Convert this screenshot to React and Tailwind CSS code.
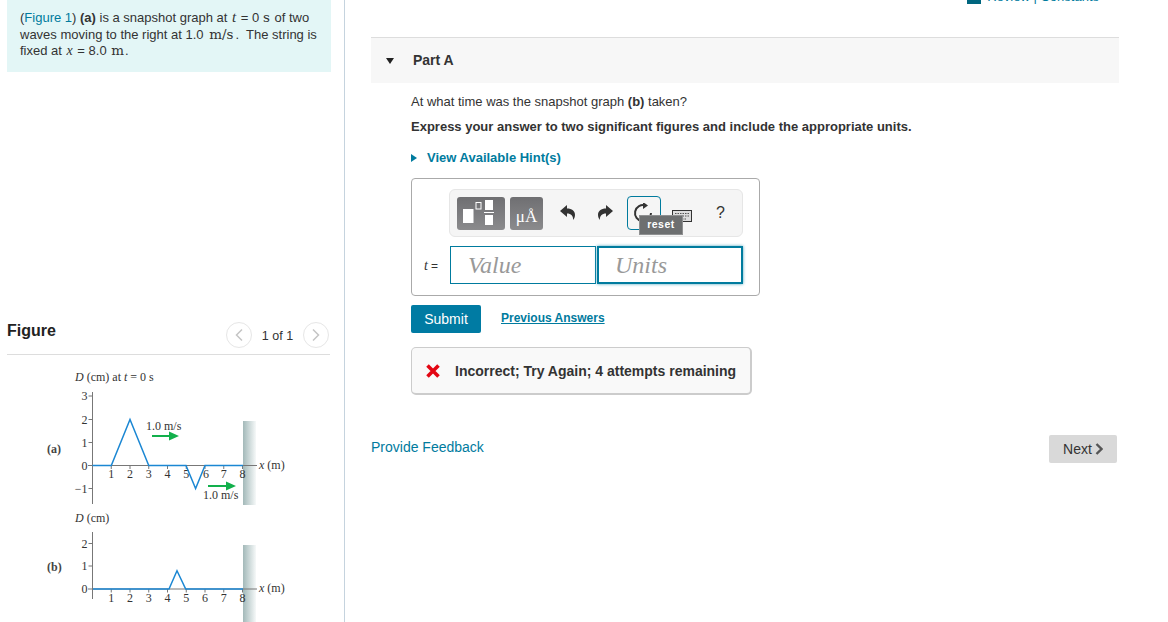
const sans = "font-['Liberation_Sans',Arial,sans-serif]";
const serif = "font-['Liberation_Serif','Times_New_Roman',serif]";
const mathUp = "font-['DejaVu_Serif',serif] text-[13.5px] leading-none";

function Graph() {
  const xs = [1, 2, 3, 4, 5, 6, 7, 8];
  const px = (n) => 92.5 + n * 18.75;
  const Tick = ({ x, y, w = 4 }) => <line x1={x - w} x2={x} y1={y} y2={y} stroke="#777" strokeWidth="1" />;
  return (
    <svg width="260" height="262" viewBox="40 360 260 262" className="block" style={{ fontFamily: "'Liberation Serif', serif" }} fill="#333" fontSize="12">
      <defs>
        <linearGradient id="wall" x1="0" x2="1" y1="0" y2="0">
          <stop offset="0" stopColor="#a3b9b9" />
          <stop offset="1" stopColor="#f6f9f9" />
        </linearGradient>
      </defs>

      {/* graph a */}
      <text x="75" y="381"><tspan fontStyle="italic">D</tspan> (cm) at <tspan fontStyle="italic">t</tspan><tspan dx="3">=</tspan><tspan dx="3">0 s</tspan></text>
      <rect x="243" y="421" width="13" height="84" fill="url(#wall)" />
      <line x1="92.5" x2="92.5" y1="392" y2="504" stroke="#777" />
      <line x1="88" x2="257" y1="465.5" y2="465.5" stroke="#777" />
      <Tick x={92.5} y={396} /><Tick x={92.5} y={419.5} /><Tick x={92.5} y={442.5} /><Tick x={92.5} y={488.5} />
      {xs.map((n) => <line key={n} x1={px(n)} x2={px(n)} y1="465.5" y2="469" stroke="#777" />)}
      {[["3", 396], ["2", 419.5], ["1", 442.5], ["0", 465.5], ["−1", 488.5]].map(([t, y]) => (
        <text key={t} x="87.500" y={y + 4} textAnchor="end">{t}</text>
      ))}
      {xs.map((n) => <text key={n} x={px(n) + (n === 6 ? 1 : 0)} y="478" textAnchor="middle">{n}</text>)}
      <polyline points="92.5,465.5 111.3,465.5 130,419.5 148.75,465.5 186,465.5 195.6,488.5 205,465.5 243,465.5" fill="none" stroke="#1b87d3" strokeWidth="1.5" />
      <text x="146" y="430">1.0 m/s</text>
      <text x="203" y="499">1.0 m/s</text>
      <path d="M152 435h17v-3.5l10 4.5-10 4.5V437h-17z" fill="#12b04c" />
      <path d="M208 485h18v-3.5l10 4.5-10 4.5V487h-18z" fill="#12b04c" />
      <text x="259" y="469"><tspan fontStyle="italic">x</tspan> (m)</text>
      <text x="47" y="453" fontWeight="bold" fill="#444">(a)</text>

      {/* graph b */}
      <text x="75" y="522"><tspan fontStyle="italic">D</tspan> (cm)</text>
      <rect x="243" y="545" width="13" height="77" fill="url(#wall)" />
      <line x1="92.5" x2="92.5" y1="532" y2="599" stroke="#777" />
      <line x1="88" x2="257" y1="589" y2="589" stroke="#777" />
      <Tick x={92.5} y={543.5} /><Tick x={92.5} y={566} />
      {xs.map((n) => <line key={n} x1={px(n)} x2={px(n)} y1="589" y2="592.5" stroke="#777" />)}
      {[["2", 543.5], ["1", 566], ["0", 589]].map(([t, y]) => (
        <text key={t} x="87.500" y={y + 4} textAnchor="end">{t}</text>
      ))}
      {xs.map((n) => <text key={n} x={px(n)} y="602" textAnchor="middle">{n}</text>)}
      <polyline points="93,589 169,589 177,570.7 185.7,589 243,589" fill="none" stroke="#1b87d3" strokeWidth="1.5" />
      <text x="259" y="592"><tspan fontStyle="italic">x</tspan> (m)</text>
      <text x="47" y="571" fontWeight="bold" fill="#444">(b)</text>
    </svg>
  );
}

function PagerBtn({ dir }) {
  return (
    <span className="w-[26px] h-[26px] rounded-full border border-[#e6e6e6] flex items-center justify-center">
      <svg width="10" height="14" viewBox="0 0 10 14" fill="none" stroke="#c4c4c4" strokeWidth="1.5">
        <path d={dir === "l" ? "M8 1.5 2.5 7 8 12.5" : "M2 1.5 7.5 7 2 12.5"} />
      </svg>
    </span>
  );
}

function LeftColumn() {
  return (
    <div className="w-[345px] shrink-0 h-full border-r border-[#c5d3de] pl-[7px] overflow-hidden">
      <div className={`w-[324px] h-[72px] bg-[#e3f6f6] pl-[13px] pt-[10px] pr-[8px] text-[13px] leading-[16.5px] text-[#333] ${sans}`}>
        (<span className="text-[#007b9e]">Figure 1</span>) <b>(a)</b> is a snapshot graph at <i className={`${serif} text-[15px] leading-none mx-[1px]`}>t</i> = 0 <span className={`${mathUp} mr-[1px]`}>s</span> of two waves moving to the right at 1.0 <span className={`${mathUp} ml-[2px] mr-[2px]`}>m/s</span>.&nbsp; The string is fixed at <i className={`${serif} text-[14px] leading-none mx-[1px]`}>x</i> = 8.0 <span className={`${mathUp} ml-[1px] mr-[1px]`}>m</span>.
      </div>

      <div className={`mt-[246px] w-[323px] h-[37px] border-b border-[#ddd] flex items-start ${sans}`}>
        <span className="text-[16px] font-bold text-[#222] leading-[26px]">Figure</span>
        <span className="ml-auto flex items-center text-[12.5px] text-[#333] mt-[4px] mr-[1px]">
          <PagerBtn dir="l" />
          <span className="w-[51px] text-center pt-[2px]">1 of 1</span>
          <PagerBtn dir="r" />
        </span>
      </div>
      <div className="-ml-[7px] pl-[40px] mt-[5px]">
        <Graph />
      </div>
    </div>
  );
}

function Toolbar() {
  return (
    <div className="ml-[37px] w-[294px] h-[48px] bg-[#f5f5f5] border border-[#e6e6e6] rounded-[6px] flex items-center relative">
      <span className="ml-[7px] w-[48px] h-[33px] rounded-[3px] bg-gradient-to-b from-[#6f6f72] to-[#8b8b8d]">
        <svg className="block" width="48" height="33" viewBox="0 0 48 33" fill="#fff">
          <rect x="6" y="12" width="10.500" height="14" />
          <rect x="19" y="5.500" width="5" height="6.500" fill="none" stroke="#fff" strokeWidth="1" />
          <rect x="28" y="3" width="8" height="10" />
          <rect x="27" y="15" width="10" height="1" />
          <rect x="28" y="18" width="8" height="10" />
        </svg>
      </span>
      <span className={`ml-[5px] w-[33px] h-[33px] rounded-[3px] bg-gradient-to-b from-[#6f6f72] to-[#8b8b8d] flex items-end justify-center pb-[5px] text-white text-[17px] leading-none ${serif}`}>
        μÅ
      </span>
      <svg className="ml-[17px]" width="15" height="16" viewBox="0 0 15 16" fill="#333">
        <path d="M0 6 7 0V3.500C12 3.500 15 6 15 10 15 12 14 14 13 15 13.500 11 11 8.500 7 8.500V12z" />
      </svg>
      <svg className="ml-[23px]" width="15" height="16" viewBox="0 0 15 16" fill="#333">
        <path d="M15 6 8 0V3.500C3 3.500 0 6 0 10 0 12 1 14 2 15 1.500 11 4 8.500 8 8.500V12z" />
      </svg>
      <span className="ml-[14px] w-[34px] h-[34px] rounded-[4px] border border-[#007b9e] flex items-center justify-center">
        <svg className="-ml-[3px]" width="20" height="20" viewBox="0 0 20 20" fill="none" stroke="#333" strokeWidth="2">
          <path d="M12.500 2.500A8 8 0 1 0 18 10" />
          <path d="M10 -1v7l5-3.500z" fill="#333" stroke="none" />
        </svg>
      </span>
      <svg className="ml-[11px] mt-[6px]" width="20" height="12" viewBox="0 0 20 12" fill="#777" stroke="#333" strokeWidth="1">
        <rect x="0.500" y="0.500" width="19" height="11" fill="#ddd" />
        <path d="M3 3.500h14M3 6h14M5 9h10" strokeDasharray="1.500 1" fill="none" stroke="#555" />
      </svg>
      <span className={`ml-[24px] text-[16px] text-[#333] ${sans}`}>?</span>
      <span className={`absolute left-[189px] top-[25px] w-[44px] h-[20px] bg-[#6d6f70] border border-[#8f9091] text-white text-[10.5px] font-bold flex items-center justify-center tracking-[0.5px] ${sans}`}>
        reset
      </span>
    </div>
  );
}

function AnswerBox() {
  return (
    <div className="mt-[12px] w-[349px] h-[118px] border border-[#aaa] rounded-[4px] pt-[10px]">
      <Toolbar />
      <div className="flex items-center mt-[9px]">
        <span className={`w-[38px] text-center text-[12px] text-[#333] ${sans}`}>
          <i className={`${serif} text-[14px]`}>t</i> =
        </span>
        <span className={`w-[146px] h-[38px] border border-[#007b9e] flex items-center pl-[17px] pb-[1px] text-[24px] italic text-[#999] ${serif}`}>Value</span>
        <span className={`ml-[1px] w-[146px] h-[38px] border-2 border-[#007b9e] shadow-[0_0_3px_#4aa3bd] flex items-center pl-[16px] pb-[1px] text-[24px] italic text-[#999] ${serif}`}>Units</span>
      </div>
    </div>
  );
}

function RightColumn() {
  return (
    <div className={`ml-[26px] w-[748px] h-full text-[#333] ${sans}`}>
      <div className="h-[37px] relative overflow-hidden">
        <div className="absolute right-[20px] -top-[11px] flex items-center text-[#007b9e] text-[13px] leading-[16px]">
          <span className="w-[14px] h-[14px] bg-[#00667f] mr-[6px]" />
          Review | Constants
        </div>
      </div>
      <div className="h-[46px] bg-[#f7f7f7] border-t border-[#ddd] flex items-center">
        <span className="ml-[15px] w-0 h-0 border-x-[4.5px] border-x-transparent border-t-[6px] border-t-[#222]" />
        <span className="ml-[19px] text-[14px] font-bold text-[#333]">Part A</span>
      </div>
      <div className="pl-[40px]">
        <p className="mt-[11px] text-[13px] leading-[16px]">At what time was the snapshot graph <b>(b)</b> taken?</p>
        <p className="mt-[9px] text-[13px] leading-[16px] font-bold">Express your answer to two significant figures and include the appropriate units.</p>
        <div className="mt-[14px] flex items-center text-[13px] leading-[17px] font-bold text-[#007b9e]">
          <span className="w-0 h-0 border-y-[4.5px] border-y-transparent border-l-[6px] border-l-[#007b9e]" />
          <span className="ml-[10px]">View Available Hint(s)</span>
        </div>
        <AnswerBox />
        <div className="mt-[9px] flex items-center">
          <span className="w-[70px] h-[28px] rounded-[2px] bg-[#007ba3] text-white text-[14px] flex items-center justify-center">Submit</span>
          <span className="ml-[20px] -mt-[3px] text-[12px] font-bold text-[#007b9e] underline">Previous Answers</span>
        </div>
        <div className="mt-[14px] w-[341px] h-[48px] rounded-[5px] bg-[#f9f9f9] border border-[#ccc] border-b-2 border-r-2 flex items-center">
          <svg className="ml-[14px]" width="14" height="14" viewBox="0 0 14 14" fill="none" stroke="#e30613" strokeWidth="3.6">
            <path d="M1.500 1.500l11 11M12.500 1.500l-11 11" />
          </svg>
          <span className="ml-[15px] pt-[1px] text-[14px] font-bold text-[#333]">Incorrect; Try Again; 4 attempts remaining</span>
        </div>
      </div>
      <div className="mt-[40px] flex items-start justify-between pr-[2px]">
        <span className="mt-[3px] text-[14px] leading-[18px] text-[#007b9e]">Provide Feedback</span>
        <span className="w-[68px] h-[28px] rounded-[2px] bg-[#d9d9d9] text-[14px] text-[#333] flex items-center justify-center gap-[3px]">
          Next
          <svg width="8" height="12" viewBox="0 0 8 12" fill="none" stroke="#555" strokeWidth="2.400"><path d="M1.500 1 6.500 6l-5 5" /></svg>
        </span>
      </div>
    </div>
  );
}

export default function App() {
  return (
    <div className="w-[1168px] h-[622px] overflow-hidden bg-white flex">
      <LeftColumn />
      <RightColumn />
    </div>
  );
}
